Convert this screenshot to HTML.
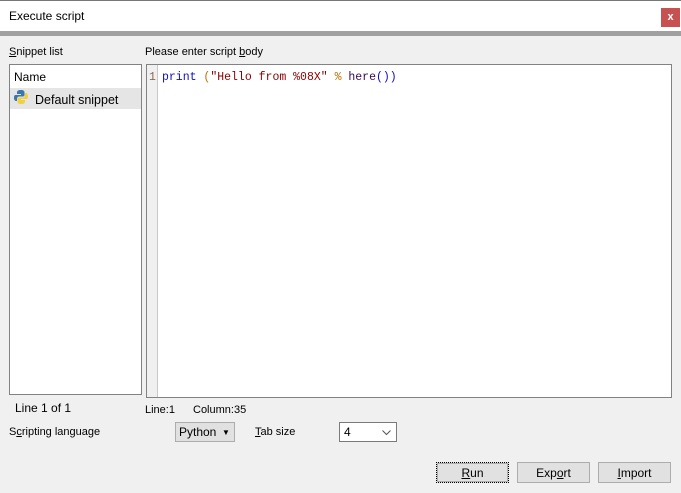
<!DOCTYPE html>
<html><head><meta charset="utf-8"><style>
*{margin:0;padding:0;box-sizing:border-box}
body{width:681px;height:493px;background:#f0f0f0;font-family:"Liberation Sans",sans-serif;font-size:11px;color:#000;position:relative;overflow:hidden}
.a{position:absolute}
.btn{position:absolute;top:462px;width:73px;height:21px;background:#e1e1e1;border:1px solid #adadad;text-align:center;line-height:20px;font-size:12px}
u{text-decoration:underline}
</style></head><body>
<div class="a" style="left:0;top:0;width:681px;height:31px;background:#fff;border-top:1px solid #777"></div>
<div class="a" style="left:9px;top:9px;font-size:12px">Execute script</div>
<div class="a" style="left:661px;top:8px;width:19px;height:19px;background:#c75050;color:#fff;font-weight:bold;font-size:11px;text-align:center;line-height:18px">x</div>
<div class="a" style="left:0;top:31px;width:681px;height:5px;background:#a0a0a0"></div>

<div class="a" style="left:9px;top:46px"><u>S</u>nippet list</div>
<div class="a" style="left:145px;top:46px">Please enter script <u>b</u>ody</div>

<div class="a" style="left:9px;top:64px;width:133px;height:331px;background:#fff;border:1px solid #828282"></div>
<div class="a" style="left:14px;top:70px;font-size:12px">Name</div>
<div class="a" style="left:10px;top:88px;width:131px;height:21px;background:#e5e5e5"></div>
<svg class="a" style="left:13px;top:89px" width="16" height="16" viewBox="0 0 16 16">
<path d="M8 1c-3 0-4 1-4 2.5V5h4v1H2.5C1 6 1 8 1 9s.5 3 2 3H4v-2c0-1.5 1-2.5 2.5-2.5h3C11 7.5 11.5 7 11.5 6V3.5C11.5 2 10.5 1 8 1z" fill="#3a76b0"/>
<path d="M8 15c3 0 4-1 4-2.5V11H8v-1h5.5C15 10 15 8 15 7s-.5-3-2-3H12v2c0 1.5-1 2.5-2.5 2.5h-3C5 8.5 4.5 9 4.5 10v2.5C4.5 14 5.5 15 8 15z" fill="#f2d040"/>
</svg>
<div class="a" style="left:35px;top:93px;font-size:12.5px">Default snippet</div>

<div class="a" style="left:146px;top:64px;width:526px;height:334px;background:#fff;border:1px solid #828282"></div>
<div class="a" style="left:147px;top:65px;width:11px;height:332px;background:#f0f0f0;border-right:1px solid #c8c8c8"></div>
<div class="a" style="left:149px;top:71px;font-family:'Liberation Mono',monospace;font-size:11.5px;color:#8a6a50">1</div>
<div class="a" style="left:162px;top:71px;font-family:'Liberation Mono',monospace;font-size:11.5px;white-space:pre"><span style="color:#1010c0">print</span> <span style="color:#c07000">(</span><span style="color:#8b0000">"Hello from %08X"</span> <span style="color:#c07000">%</span> <span style="color:#3a0a50">here</span><span style="color:#1010c0">())</span></div>

<div class="a" style="left:15px;top:401px;font-size:12px">Line 1 of 1</div>
<div class="a" style="left:145px;top:404px">Line:1</div>
<div class="a" style="left:193px;top:404px">Column:35</div>

<div class="a" style="left:9px;top:426px">S<u>c</u>ripting language</div>
<div class="a" style="left:175px;top:422px;width:60px;height:20px;background:#e1e1e1;border:1px solid #adadad;font-size:12px;line-height:19px;padding-left:3px">Python<span style="position:absolute;left:46px;top:0;font-size:8px">▼</span></div>
<div class="a" style="left:255px;top:426px"><u>T</u>ab size</div>
<div class="a" style="left:339px;top:422px;width:58px;height:20px;background:#fff;border:1px solid #7a7a7a;font-size:12px;line-height:19px;padding-left:4px">4
<svg style="position:absolute;left:42px;top:7px" width="9" height="6"><path d="M0.5 0.5L4.5 4.5L8.5 0.5" stroke="#555" fill="none"/></svg></div>

<div class="btn" style="left:436px;border:1px dotted #000;outline:1px solid #adadad;outline-offset:-2px"><u>R</u>un</div>
<div class="btn" style="left:517px">Exp<u>o</u>rt</div>
<div class="btn" style="left:598px"><u>I</u>mport</div>
</body></html>
